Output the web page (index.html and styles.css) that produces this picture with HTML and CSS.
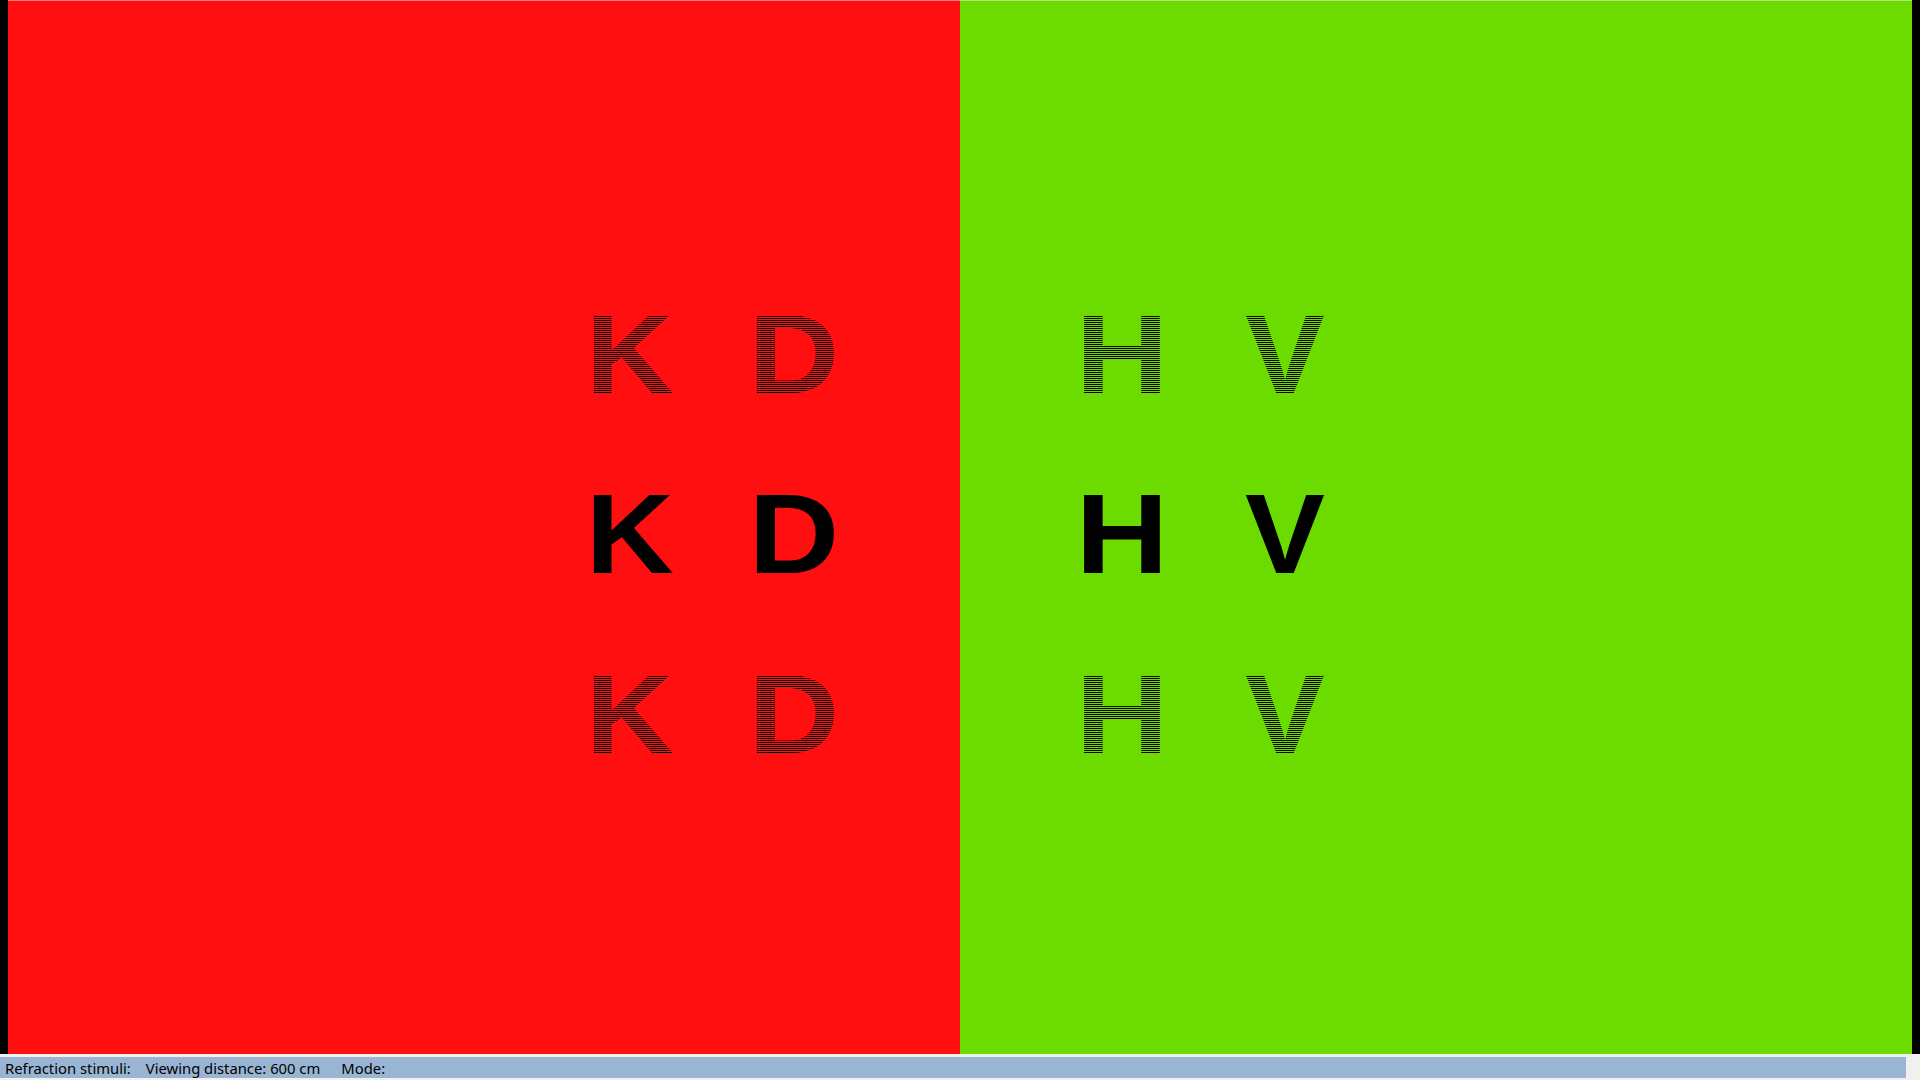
FILE: index.html
```html
<!DOCTYPE html>
<html lang="en">
<head>
<meta charset="utf-8">
<title>Refraction stimuli</title>
<link rel="stylesheet" href="styles.css">
</head>
<body>
<div class="screen">
  <div class="stage">
    <div class="edge"></div>
    <div class="panel panel-red">
      <div class="chart">
        <span class="opt striped k">K</span><span class="opt striped d">D</span>
        <span class="opt k">K</span><span class="opt d">D</span>
        <span class="opt striped k">K</span><span class="opt striped d">D</span>
      </div>
    </div>
    <div class="panel panel-green">
      <div class="chart">
        <span class="opt striped h">H</span><span class="opt striped v">V</span>
        <span class="opt h">H</span><span class="opt v">V</span>
        <span class="opt striped h">H</span><span class="opt striped v">V</span>
      </div>
    </div>
    <div class="edge"></div>
  </div>
  <div class="statusarea">
    <div class="statusbar">
      <span class="item item-1">Refraction stimuli:</span>
      <span class="item item-2">Viewing distance: 600 cm</span>
      <span class="item item-3">Mode:</span>
    </div>
  </div>
</div>
</body>
</html>
```

FILE: styles.css
```css
html, body {
  margin: 0;
  padding: 0;
  width: 1920px;
  height: 1080px;
  overflow: hidden;
  background: #f0f0f0;
}

.screen {
  display: flex;
  flex-direction: column;
  width: 1920px;
  height: 1080px;
}

.stage {
  display: flex;
  height: 1054px;
  flex: 0 0 1054px;
}

.edge {
  width: 8px;
  flex: 0 0 8px;
  background: #000;
}

.panel {
  flex: 0 0 952px;
  width: 952px;
  display: flex;
  align-items: flex-start;
  padding-top: 314px;
  box-sizing: border-box;
  border-top: 1px solid rgba(255, 255, 255, 0.45);
}

.panel-red {
  background: #ff0f0f;
  justify-content: flex-end;
  padding-right: 127px;
}

.panel-green {
  background: #6bdb00;
  justify-content: flex-start;
  padding-left: 121px;
}

.chart {
  display: grid;
  grid-template-columns: 80px 80px;
  grid-auto-rows: 80px;
  column-gap: 84px;
  row-gap: 100px;
  margin-top: -1px;
}

.opt {
  display: block;
  width: 80px;
  height: 80px;
  font-family: "Liberation Sans", Arial, sans-serif;
  font-weight: 700;
  font-size: 113px;
  line-height: 80px;
  text-align: center;
  color: #000;
  overflow: visible;
  white-space: nowrap;
  transform-origin: 50% 50%;
}

.k { transform: scaleX(1.08); }
.d { transform: scaleX(1.11); }
.h { transform: scaleX(1.14); }
.v { transform: scaleX(1.06); }

.striped {
  color: transparent;
  background-image: repeating-linear-gradient(to bottom, #000 0, #000 1px, transparent 1px, transparent 2px);
  -webkit-background-clip: text;
  background-clip: text;
}

.statusarea {
  flex: 1 1 auto;
  padding: 3px 14px 2px 0;
  display: flex;
}

.statusbar {
  flex: 1 1 auto;
  background: #9ab5d3;
  height: 21px;
  display: flex;
  align-items: center;
  font-family: "Noto Sans", "Open Sans", sans-serif;
  font-size: 14.8px;
  color: #000;
  white-space: nowrap;
}

.item-1 { margin-left: 5px; }
.item-2 { margin-left: 15px; }
.item-3 { margin-left: 21px; }
```
